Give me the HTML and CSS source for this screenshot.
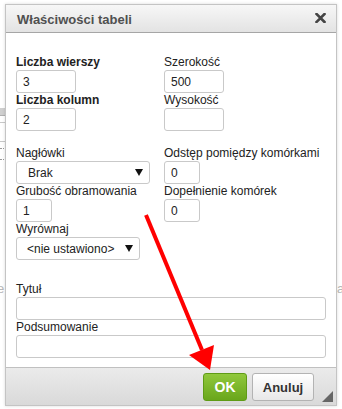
FILE: index.html
```html
<!DOCTYPE html>
<html lang="pl">
<head>
<meta charset="utf-8">
<link rel="stylesheet" href="styles.css">
</head>
<body>
<div class="backdrop">
  <div class="bg-left">
    <div class="bg-bar"></div>
    <div class="bg-box"></div>
    <div class="bg-dots"></div>
  </div>
  <span class="bg-clip bg-e"><span class="bg-char">e</span></span>
  <span class="bg-clip bg-a"><span class="bg-char">a</span></span>
</div>
<div class="dialog">
  <div class="title">
    <span class="title-text">Właściwości tabeli</span>
    <svg class="close" width="11" height="10" viewBox="0 0 11 10"><path d="M1.5 1 L9.5 9 M9.5 1 L1.5 9" stroke="#444" stroke-width="2.6" stroke-linecap="square"/></svg>
  </div>
  <div class="content">
    <div class="grid">
      <div class="col">
        <label class="lbl bold">Liczba wierszy</label>
        <input class="inp w60" value="3">
        <label class="lbl bold">Liczba kolumn</label>
        <input class="inp w60" value="2">
      </div>
      <div class="col">
        <label class="lbl">Szerokość</label>
        <input class="inp w60" value="500">
        <label class="lbl">Wysokość</label>
        <input class="inp w60" value="">
      </div>
    </div>
    <div class="grid row2">
      <div class="col">
        <label class="lbl">Nagłówki</label>
        <div class="sel w134"><span>Brak</span><i class="tri"></i></div>
        <label class="lbl">Grubość obramowania</label>
        <input class="inp w36" value="1">
        <label class="lbl">Wyrównaj</label>
        <div class="sel w124"><span>&lt;nie ustawiono&gt;</span><i class="tri"></i></div>
      </div>
      <div class="col">
        <label class="lbl">Odstęp pomiędzy komórkami</label>
        <input class="inp w36" value="0">
        <label class="lbl">Dopełnienie komórek</label>
        <input class="inp w36" value="0">
      </div>
    </div>
    <div class="full">
      <label class="lbl">Tytuł</label>
      <input class="inp wfull" value="">
      <label class="lbl">Podsumowanie</label>
      <input class="inp wfull" value="">
    </div>
  </div>
  <div class="footer">
    <button class="btn ok">OK</button>
    <button class="btn cancel">Anuluj</button>
    <i class="resize"></i>
  </div>
</div>
<svg class="arrow" width="342" height="409" viewBox="0 0 342 409">
  <line x1="146" y1="215" x2="202" y2="350" stroke="#ff0000" stroke-width="4"/>
  <polygon points="210,370 189,355 214,345" fill="#ff0000"/>
</svg>
</body>
</html>
```

FILE: styles.css
```css
html, body {
  margin: 0;
  padding: 0;
  background: #fff;
  width: 342px;
  height: 409px;
  overflow: hidden;
  font-family: Arial, "Liberation Sans", sans-serif;
}
body { position: relative; }

.backdrop {
  position: absolute;
  left: 0; top: 0;
  width: 342px; height: 409px;
}
.bg-left {
  position: absolute;
  left: 0; top: 108px;
  width: 6px; height: 115px;
}
.bg-bar {
  height: 7px;
  background: #cfcfcf;
  border-bottom: 1px solid #b0b0b0;
}
.bg-box {
  margin-top: 6px;
  height: 18px;
  border: 1px solid #c8c8c8;
  border-left: none;
}
.bg-dots {
  margin-top: 6px;
  height: 10px;
  width: 4px;
  border-top: 1px dotted #999;
  border-bottom: 1px dotted #999;
}
.bg-clip {
  position: absolute;
  top: 281px;
  width: 5px;
  height: 16px;
  overflow: hidden;
}
.bg-char {
  display: block;
  font-size: 13px;
  line-height: 16px;
  color: #b8b8b8;
}
.bg-e { left: 0; }
.bg-e .bg-char { margin-left: -3px; }
.bg-a { left: 337px; }

.dialog {
  position: absolute;
  left: 5px;
  top: 4px;
  width: 332px;
  box-sizing: border-box;
  border: 1px solid #c4c4c4;
  background: #fff;
  box-shadow: 0 0 3px rgba(0,0,0,0.15);
}
.title {
  height: 27px;
  border-bottom: 1px solid #a6a6a6;
  background: linear-gradient(#f7f7f7, #e3e3e3);
  display: flex;
  align-items: center;
  justify-content: space-between;
  padding: 0 10px 0 11px;
}
.title-text {
  font-size: 13px;
  font-weight: bold;
  color: #505050;
  padding-top: 1px;
}
.close { margin-top: -1px; }

.content {
  padding: 22px 10px 9px 10px;
  border-bottom: 1px solid #c0c0c0;
}
.grid {
  display: grid;
  grid-template-columns: 148px 1fr;
}
.row2 { margin-top: 15px; }
.col { display: flex; flex-direction: column; align-items: flex-start; }
.full { display: flex; flex-direction: column; margin-top: 22px; }

.lbl {
  display: block;
  font-size: 12px;
  line-height: 15px;
  height: 15px;
  color: #222;
  white-space: nowrap;
}
.bold { font-weight: bold; }

.inp {
  box-sizing: border-box;
  height: 23px;
  margin: 0;
  border: 1px solid #c9c9c9;
  border-radius: 3px;
  padding: 0 6px;
  font-family: Arial, "Liberation Sans", sans-serif;
  font-size: 12px;
  color: #222;
  background: #fff;
  outline: none;
}
.w60 { width: 60px; }
.w36 { width: 36px; }
.wfull { width: 310px; }

.sel {
  box-sizing: border-box;
  height: 23px;
  border: 1px solid #c9c9c9;
  border-radius: 3px;
  display: flex;
  align-items: center;
  justify-content: space-between;
  padding: 0 6px 0 11px;
  font-size: 12px;
  color: #222;
  background: #fff;
}
.w134 { width: 134px; }
.w124 { width: 124px; padding-left: 10px; }
.tri {
  width: 0; height: 0;
  border-left: 4px solid transparent;
  border-right: 4px solid transparent;
  border-top: 7px solid #111;
}

.footer {
  height: 37px;
  background: linear-gradient(#ebebeb, #d9d9d9);
  display: flex;
  align-items: flex-start;
  padding: 5px 0 0 197px;
  box-sizing: border-box;
  position: relative;
}
.btn {
  box-sizing: border-box;
  height: 28px;
  border-radius: 3px;
  font-family: Arial, "Liberation Sans", sans-serif;
  font-weight: bold;
  font-size: 13px;
  padding: 0;
  margin: 0;
  cursor: default;
}
.ok {
  width: 44px;
  border: 1px solid #5f9b16;
  background: linear-gradient(#90c83c, #69a61b);
  color: #fff;
  font-size: 14px;
}
.cancel {
  width: 62px;
  margin-left: 5px;
  border: 1px solid #b3b3b3;
  background: linear-gradient(#ffffff, #e8e8e8);
  color: #333;
}
.resize {
  position: absolute;
  right: 3px;
  bottom: 3px;
  width: 0; height: 0;
  border-left: 11px solid transparent;
  border-bottom: 11px solid #666;
}

.arrow {
  position: absolute;
  left: 0; top: 0;
  pointer-events: none;
}
```
